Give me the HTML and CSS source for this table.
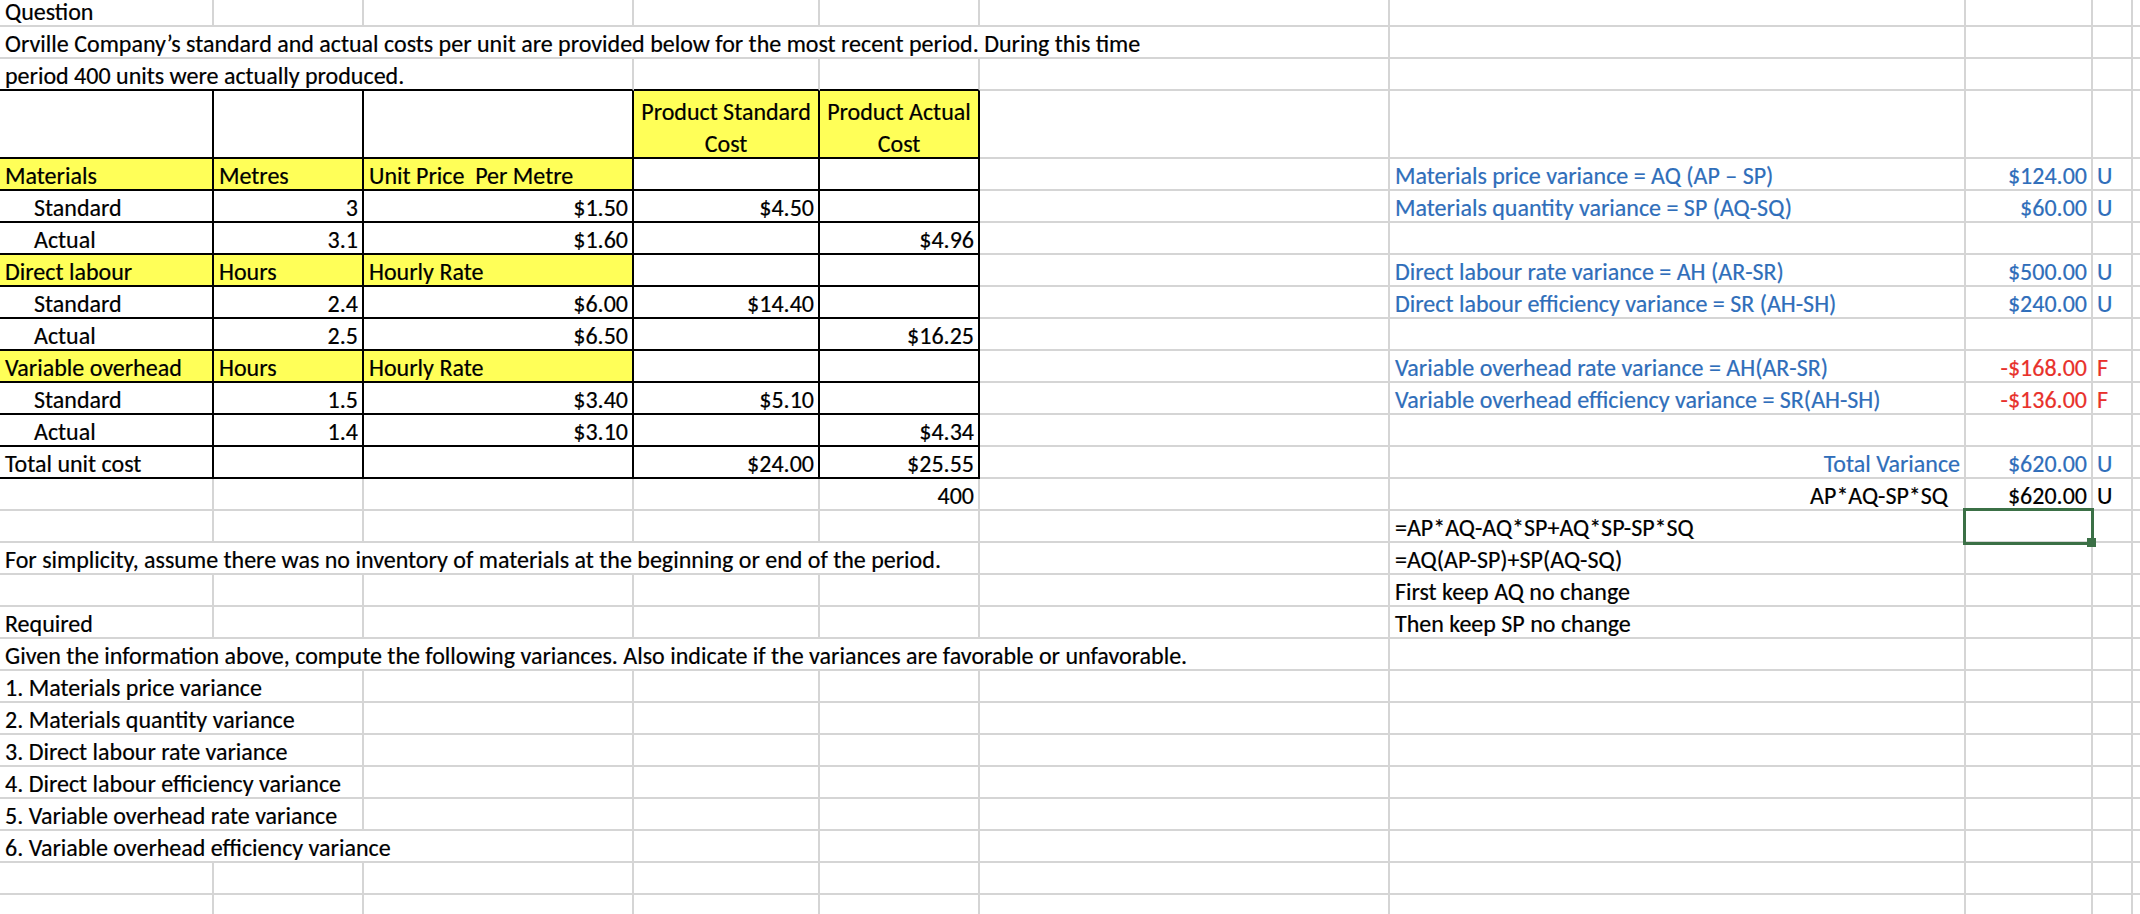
FILE: index.html
```html
<!DOCTYPE html>
<html lang="en">
<head>
<meta charset="utf-8">
<title>Variance sheet</title>
<link rel="stylesheet" href="styles.css">
</head>
<body>
<div class="sheet">
  <!-- row 1 -->
  <div class="c">Question</div><div class="c"></div><div class="c"></div><div class="c"></div><div class="c"></div><div class="c"></div><div class="c"></div><div class="c"></div><div class="c"></div><div class="c"></div>
  <!-- row 2 -->
  <div class="c s6">Orville Company’s standard and actual costs per unit are provided below for the most recent period. During this time</div><div class="c"></div><div class="c"></div><div class="c"></div><div class="c"></div>
  <!-- row 3 -->
  <div class="c s3 bb">period 400 units were actually produced.</div><div class="c bb"></div><div class="c bb"></div><div class="c"></div><div class="c"></div><div class="c"></div><div class="c"></div><div class="c"></div>
  <!-- row 4 -->
  <div class="c b"></div><div class="c b"></div><div class="c b"></div><div class="c b y hd">Product Standard Cost</div><div class="c b y hd">Product Actual Cost</div><div class="c"></div><div class="c"></div><div class="c"></div><div class="c"></div><div class="c"></div>
  <!-- row 5 -->
  <div class="c b y">Materials</div><div class="c b y">Metres</div><div class="c b y">Unit Price&nbsp; Per Metre</div><div class="c b"></div><div class="c b"></div><div class="c"></div><div class="c blue">Materials price variance = AQ (AP – SP)</div><div class="c r blue">$124.00</div><div class="c blue u">U</div><div class="c"></div>
  <!-- row 6 -->
  <div class="c b ind">Standard</div><div class="c b r">3</div><div class="c b r">$1.50</div><div class="c b r">$4.50</div><div class="c b"></div><div class="c"></div><div class="c blue">Materials quantity variance = SP (AQ-SQ)</div><div class="c r blue">$60.00</div><div class="c blue u">U</div><div class="c"></div>
  <!-- row 7 -->
  <div class="c b ind">Actual</div><div class="c b r">3.1</div><div class="c b r">$1.60</div><div class="c b"></div><div class="c b r">$4.96</div><div class="c"></div><div class="c"></div><div class="c"></div><div class="c"></div><div class="c"></div>
  <!-- row 8 -->
  <div class="c b y">Direct labour</div><div class="c b y">Hours</div><div class="c b y">Hourly Rate</div><div class="c b"></div><div class="c b"></div><div class="c"></div><div class="c blue">Direct labour rate variance = AH (AR-SR)</div><div class="c r blue">$500.00</div><div class="c blue u">U</div><div class="c"></div>
  <!-- row 9 -->
  <div class="c b ind">Standard</div><div class="c b r">2.4</div><div class="c b r">$6.00</div><div class="c b r">$14.40</div><div class="c b"></div><div class="c"></div><div class="c blue">Direct labour efficiency variance = SR (AH-SH)</div><div class="c r blue">$240.00</div><div class="c blue u">U</div><div class="c"></div>
  <!-- row 10 -->
  <div class="c b ind">Actual</div><div class="c b r">2.5</div><div class="c b r">$6.50</div><div class="c b"></div><div class="c b r">$16.25</div><div class="c"></div><div class="c"></div><div class="c"></div><div class="c"></div><div class="c"></div>
  <!-- row 11 -->
  <div class="c b y">Variable overhead</div><div class="c b y">Hours</div><div class="c b y">Hourly Rate</div><div class="c b"></div><div class="c b"></div><div class="c"></div><div class="c blue">Variable overhead rate variance = AH(AR-SR)</div><div class="c r red">-$168.00</div><div class="c red u">F</div><div class="c"></div>
  <!-- row 12 -->
  <div class="c b ind">Standard</div><div class="c b r">1.5</div><div class="c b r">$3.40</div><div class="c b r">$5.10</div><div class="c b"></div><div class="c"></div><div class="c blue">Variable overhead efficiency variance = SR(AH-SH)</div><div class="c r red">-$136.00</div><div class="c red u">F</div><div class="c"></div>
  <!-- row 13 -->
  <div class="c b ind">Actual</div><div class="c b r">1.4</div><div class="c b r">$3.10</div><div class="c b"></div><div class="c b r">$4.34</div><div class="c"></div><div class="c"></div><div class="c"></div><div class="c"></div><div class="c"></div>
  <!-- row 14 -->
  <div class="c b">Total unit cost</div><div class="c b"></div><div class="c b"></div><div class="c b r">$24.00</div><div class="c b r">$25.55</div><div class="c"></div><div class="c r blue">Total Variance</div><div class="c r blue">$620.00</div><div class="c blue u">U</div><div class="c"></div>
  <!-- row 15 -->
  <div class="c"></div><div class="c"></div><div class="c"></div><div class="c"></div><div class="c r">400</div><div class="c"></div><div class="c r wide">AP*AQ-SP*SQ</div><div class="c r">$620.00</div><div class="c u">U</div><div class="c"></div>
  <!-- row 16 -->
  <div class="c"></div><div class="c"></div><div class="c"></div><div class="c"></div><div class="c"></div><div class="c"></div><div class="c">=AP*AQ-AQ*SP+AQ*SP-SP*SQ</div><div class="c sel"><span class="handle"></span></div><div class="c"></div><div class="c"></div>
  <!-- row 17 -->
  <div class="c s5">For simplicity, assume there was no inventory of materials at the beginning or end of the period.</div><div class="c"></div><div class="c">=AQ(AP-SP)+SP(AQ-SQ)</div><div class="c"></div><div class="c"></div><div class="c"></div>
  <!-- row 18 -->
  <div class="c"></div><div class="c"></div><div class="c"></div><div class="c"></div><div class="c"></div><div class="c"></div><div class="c">First keep AQ no change</div><div class="c"></div><div class="c"></div><div class="c"></div>
  <!-- row 19 -->
  <div class="c">Required</div><div class="c"></div><div class="c"></div><div class="c"></div><div class="c"></div><div class="c"></div><div class="c">Then keep SP no change</div><div class="c"></div><div class="c"></div><div class="c"></div>
  <!-- row 20 -->
  <div class="c s6">Given the information above, compute the following variances. Also indicate if the variances are favorable or unfavorable.</div><div class="c"></div><div class="c"></div><div class="c"></div><div class="c"></div>
  <!-- row 21 -->
  <div class="c s2">1. Materials price variance</div><div class="c"></div><div class="c"></div><div class="c"></div><div class="c"></div><div class="c"></div><div class="c"></div><div class="c"></div><div class="c"></div>
  <!-- row 22 -->
  <div class="c s2">2. Materials quantity variance</div><div class="c"></div><div class="c"></div><div class="c"></div><div class="c"></div><div class="c"></div><div class="c"></div><div class="c"></div><div class="c"></div>
  <!-- row 23 -->
  <div class="c s2">3. Direct labour rate variance</div><div class="c"></div><div class="c"></div><div class="c"></div><div class="c"></div><div class="c"></div><div class="c"></div><div class="c"></div><div class="c"></div>
  <!-- row 24 -->
  <div class="c s2">4. Direct labour efficiency variance</div><div class="c"></div><div class="c"></div><div class="c"></div><div class="c"></div><div class="c"></div><div class="c"></div><div class="c"></div><div class="c"></div>
  <!-- row 25 -->
  <div class="c s2">5. Variable overhead rate variance</div><div class="c"></div><div class="c"></div><div class="c"></div><div class="c"></div><div class="c"></div><div class="c"></div><div class="c"></div><div class="c"></div>
  <!-- row 26 -->
  <div class="c s3">6. Variable overhead efficiency variance</div><div class="c"></div><div class="c"></div><div class="c"></div><div class="c"></div><div class="c"></div><div class="c"></div><div class="c"></div>
  <!-- row 27 -->
  <div class="c"></div><div class="c"></div><div class="c"></div><div class="c"></div><div class="c"></div><div class="c"></div><div class="c"></div><div class="c"></div><div class="c"></div><div class="c"></div>
  <!-- row 28 -->
  <div class="c"></div><div class="c"></div><div class="c"></div><div class="c"></div><div class="c"></div><div class="c"></div><div class="c"></div><div class="c"></div><div class="c"></div><div class="c"></div>
</div>
</body>
</html>
```
FILE: styles.css
```css
html, body {
  margin: 0;
  padding: 0;
  background: #ffffff;
  overflow: hidden;
}

body {
  width: 2140px;
  height: 914px;
  font-family: "Carlito", "Calibri", "Lato", sans-serif;
  font-size: 24px;
  color: #000000;
  -webkit-text-stroke: 0.2px currentColor;
}

.sheet {
  display: grid;
  grid-template-columns: 214px 150px 270px 186px 160px 410px 576px 127px 40px 40px;
  grid-template-rows: 27px 32px 32px 68px repeat(24, 32px);
}

.c {
  box-sizing: border-box;
  display: flex;
  align-items: flex-end;
  justify-content: flex-start;
  padding: 0 4px 0 5px;
  border-right: 2px solid #d5d5d5;
  border-bottom: 2px solid #d5d5d5;
  white-space: nowrap;
  line-height: 27px;
  min-width: 0;
}

.s2 { grid-column: span 2; }
.s3 { grid-column: span 3; }
.s5 { grid-column: span 5; }
.s6 { grid-column: span 6; }

.b {
  border-right-color: #000000;
  border-bottom-color: #000000;
}

.bb {
  border-bottom-color: #000000;
}

.y {
  background: #ffff58;
}

.r {
  justify-content: flex-end;
}

.ind {
  padding-left: 34px;
}

.u {
  padding-left: 4px;
}

.wide {
  padding-right: 16px;
}

.hd {
  align-items: flex-start;
  justify-content: center;
  text-align: center;
  white-space: normal;
  line-height: 32px;
  padding: 5px 2px 0 2px;
}

.blue {
  color: #2f6eba;
}

.red {
  color: #e8312b;
}

.sel {
  position: relative;
}

.sel::before {
  content: "";
  position: absolute;
  left: -3px;
  top: -3px;
  right: -3px;
  bottom: -4px;
  border: 3px solid #3b7046;
}

.handle {
  position: absolute;
  right: -5px;
  bottom: -6px;
  width: 9px;
  height: 9px;
  background: #3b7046;
}
```
